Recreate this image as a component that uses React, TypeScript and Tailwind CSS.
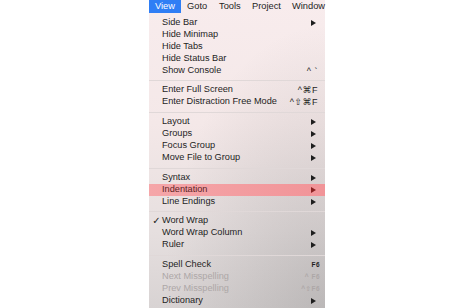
import React from 'react'

type Item =
  | { sep: true; h: number }
  | { label: string; arrow?: boolean; keys?: string; small?: boolean; disabled?: boolean; checked?: boolean; active?: boolean }

const items: Item[] = [
  { label: 'Side Bar', arrow: true },
  { label: 'Hide Minimap' },
  { label: 'Hide Tabs' },
  { label: 'Hide Status Bar' },
  { label: 'Show Console', keys: '^ `' },
  { sep: true, h: 7 },
  { label: 'Enter Full Screen', keys: '^⌘F' },
  { label: 'Enter Distraction Free Mode', keys: '^⇧⌘F' },
  { sep: true, h: 8 },
  { label: 'Layout', arrow: true },
  { label: 'Groups', arrow: true },
  { label: 'Focus Group', arrow: true },
  { label: 'Move File to Group', arrow: true },
  { sep: true, h: 8 },
  { label: 'Syntax', arrow: true },
  { label: 'Indentation', arrow: true, active: true },
  { label: 'Line Endings', arrow: true },
  { sep: true, h: 7 },
  { label: 'Word Wrap', checked: true },
  { label: 'Word Wrap Column', arrow: true },
  { label: 'Ruler', arrow: true },
  { sep: true, h: 8 },
  { label: 'Spell Check', keys: 'F6', small: true },
  { label: 'Next Misspelling', keys: '^ F6', small: true, disabled: true },
  { label: 'Prev Misspelling', keys: '^⇧F6', small: true, disabled: true },
  { label: 'Dictionary', arrow: true },
]

function Arrow({ color }: { color: string }) {
  return (
    <svg width="5" height="6" viewBox="0 0 5 6">
      <polygon points="0,0 5,3 0,6" fill={color} />
    </svg>
  )
}

export default function App() {
  return (
    <div className="w-[474px] h-[308px] bg-white flex overflow-hidden font-['Liberation_Sans','DejaVu_Sans',sans-serif]">
      <div className="ml-[149px] w-[176px] h-full flex flex-col bg-[radial-gradient(ellipse_at_100%_100%,rgba(120,120,120,0.3),transparent_65%),linear-gradient(to_bottom,#f8eced,#f4e8e8_40%,#e6dfdf_75%,#d8d3d3)]">
        {/* menu bar */}
        <div className="h-[13px] flex items-center text-[9.3px] text-[#1e1e1e] leading-none whitespace-nowrap">
          <div className="h-full w-[32px] flex items-center justify-center bg-[#2f7ef5] text-white">View</div>
          <div className="w-[38px] pl-[6px]">Goto</div>
          <div className="w-[33px]">Tools</div>
          <div className="w-[40px]">Project</div>
          <div className="w-[33px]">Window</div>
        </div>

        <div className="pt-[4px] flex flex-col">
          {items.map((it, i) =>
            'sep' in it ? (
              <div key={i} className={`flex items-center ${it.h === 7 ? 'h-[7px]' : 'h-[8px]'}`}>
                <div className="h-px w-full bg-[#e0d8d8]" />
              </div>
            ) : (
              <div
                key={i}
                className={`h-[12px] flex items-center text-[9.2px] leading-none whitespace-nowrap ${
                  it.active
                    ? 'bg-[linear-gradient(to_right,#f5a6a9,#f19498)] text-[#5c2426]'
                    : it.disabled
                    ? 'text-[#ada7a7]'
                    : 'text-[#1e1e1e]'
                }`}
              >
                <div className="w-[13px] flex justify-center text-[10px] pl-[2px] text-[#222]">{it.checked ? '✓' : ''}</div>
                <div className="flex-1">{it.label}</div>
                {it.arrow && (
                  <div className="pr-[9px] flex items-center">
                    <Arrow color={it.active ? '#8a2222' : '#1e1e1e'} />
                  </div>
                )}
                {it.keys && (
                  <div className={`${it.small ? 'text-[6.5px] font-bold pr-[5px]' : 'text-[9px] pr-[7px]'} tracking-[0.5px]`}>
                    {it.keys}
                  </div>
                )}
              </div>
            )
          )}
        </div>
      </div>
    </div>
  )
}
